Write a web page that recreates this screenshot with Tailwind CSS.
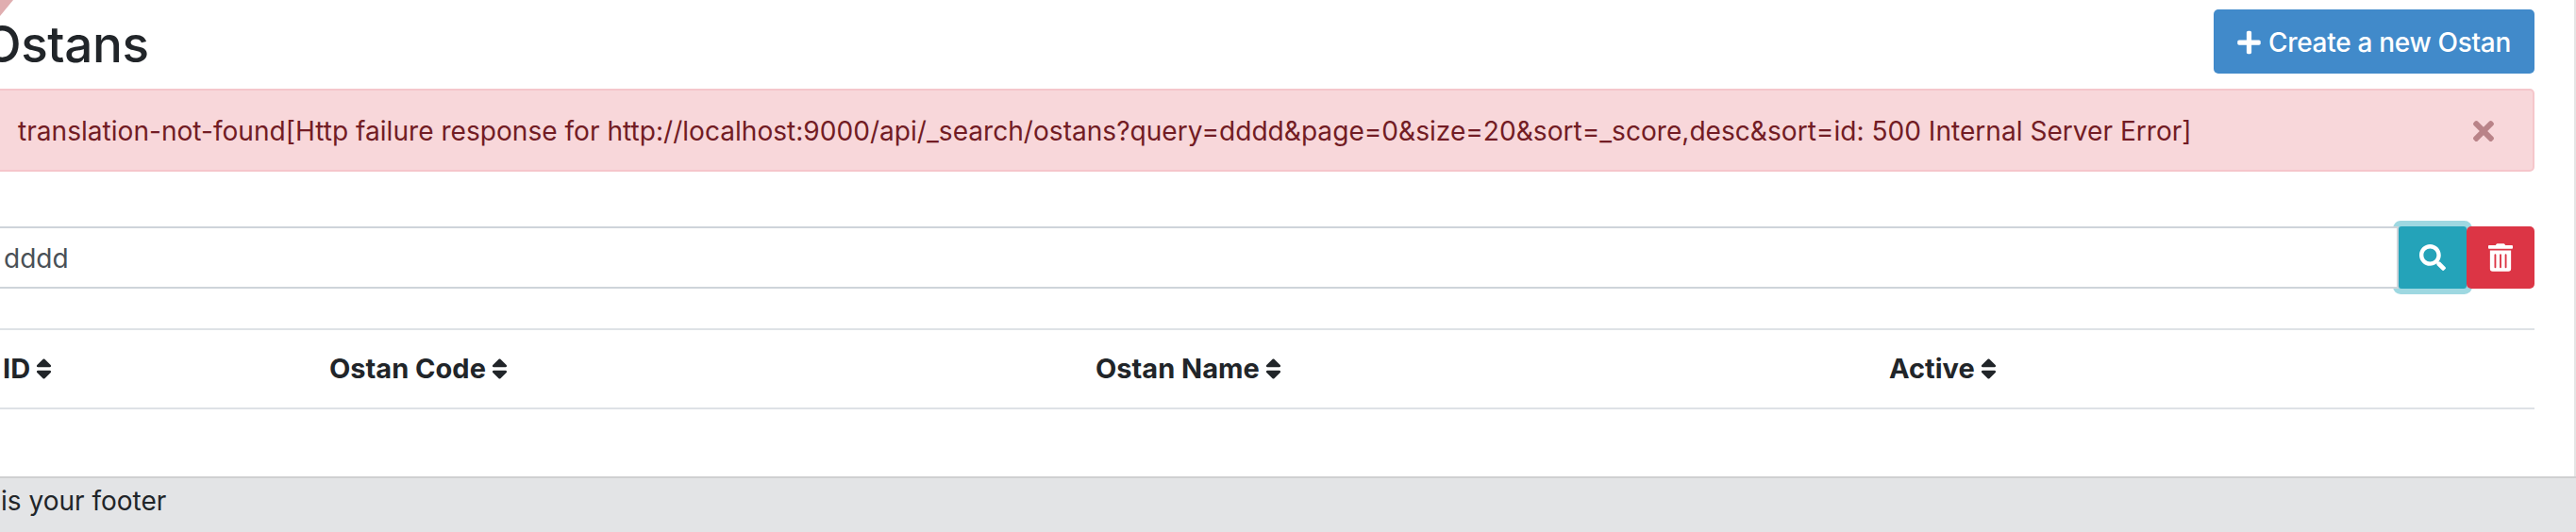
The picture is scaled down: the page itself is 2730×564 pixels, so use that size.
<!DOCTYPE html>
<html lang="en">
<head>
  <meta charset="UTF-8" />
  <title>Ostans</title>
  <script src="https://cdn.jsdelivr.net/npm/@tailwindcss/browser@4"></script>
</head>
<body class="relative h-[564px] w-[2730px] overflow-hidden bg-white font-['Inter','Roboto',sans-serif] text-[#212529]">

  <!-- ribbon corner -->
  <div class="absolute left-0 top-0 h-[17px] w-[14px] bg-[#e0aeb0] [clip-path:polygon(0_0,100%_0,0_100%)]"></div>

  <div class="flex h-[505px] w-[2730px] flex-col border-r-2 border-[#e5e5e5] pr-[42px] pl-0">
    <main class="-ml-[18px] flex w-[2704px] flex-col">

      <!-- title -->
      <div class="flex h-[94px] items-start justify-between pt-[10px]">
        <h2 class="pt-[3px] text-[53px] leading-[68px] font-medium tracking-[-0.4px]">Ostans</h2>
        <button class="flex h-[68px] w-[340px] items-center justify-center gap-[8px] rounded-[5px] bg-[#418aca] pt-[2px] text-[28px] font-medium text-white">
          <svg class="h-[28px] w-[25px] fill-white" viewBox="0 0 448 512"><path d="M416 208H272V64c0-17.67-14.33-32-32-32h-32c-17.67 0-32 14.33-32 32v144H32c-17.67 0-32 14.33-32 32v32c0 17.67 14.33 32 32 32h144v144c0 17.67 14.33 32 32 32h32c17.67 0 32-14.33 32-32V304h144c17.67 0 32-14.33 32-32v-32c0-17.67-14.33-32-32-32z"/></svg>
          <span class="tracking-[-0.3px]">Create a new Ostan</span>
        </button>
      </div>

      <!-- alert -->
      <div class="flex h-[88px] items-center justify-between rounded-[5px] border-2 border-[#f5c6cb] bg-[#f8d7da] pr-[41px] pl-[35px] text-[#721c24]">
        <span class="pt-[2px] text-[28.1px] whitespace-nowrap">translation-not-found[Http failure response for http://localhost:9000/api/_search/ostans?query=dddd&amp;page=0&amp;size=20&amp;sort=_score,desc&amp;sort=id: 500 Internal Server Error]</span>
        <svg class="mt-[2px] h-[32px] w-[22px] fill-[#b98388]" viewBox="0 0 352 512"><path d="M242.72 256l100.07-100.07c12.28-12.28 12.28-32.19 0-44.48l-22.24-22.24c-12.28-12.28-32.19-12.28-44.48 0L176 189.28 75.93 89.21c-12.28-12.28-32.19-12.28-44.48 0L9.21 111.45c-12.28 12.28-12.28 32.19 0 44.48L109.28 256 9.21 356.07c-12.28 12.28-12.28 32.19 0 44.48l22.24 22.24c12.28 12.28 32.2 12.28 44.48 0L176 322.72l100.07 100.07c12.28 12.28 32.2 12.28 44.48 0l22.24-22.24c12.28-12.28 12.28-32.19 0-44.48L242.72 256z"/></svg>
      </div>

      <!-- search -->
      <div class="mt-[58px] flex h-[66px]">
        <input value="dddd" class="relative z-20 h-[66px] flex-1 border-2 border-[#ced4da] bg-white pt-[2px] pl-[20px] text-[28px] text-[#495057]" />
        <button class="relative z-10 flex h-[66px] w-[72px] items-center justify-center rounded-[3px] bg-[#24a3b9] shadow-[0_0_0_6px_rgba(23,162,184,0.42)]">
          <svg class="h-[28px] w-[28px] fill-white" viewBox="0 0 512 512"><path d="M505 442.7L405.3 343c-4.5-4.5-10.6-7-17-7H372c27.6-35.3 44-79.7 44-128C416 93.1 322.9 0 208 0S0 93.1 0 208s93.1 208 208 208c48.3 0 92.7-16.4 128-44v16.3c0 6.4 2.5 12.5 7 17l99.7 99.7c9.4 9.4 24.6 9.4 33.9 0l28.3-28.3c9.4-9.4 9.4-24.6.1-34zM208 336c-70.7 0-128-57.2-128-128 0-70.7 57.2-128 128-128 70.7 0 128 57.2 128 128 0 70.7-57.2 128-128 128z"/></svg>
        </button>
        <button class="relative z-20 flex h-[66px] w-[72px] items-center justify-center rounded-[5px] bg-[#dc3545]">
          <svg class="h-[30px] w-[26px] fill-white" viewBox="0 0 448 512"><path d="M32 464a48 48 0 0 0 48 48h288a48 48 0 0 0 48-48V128H32zm272-256a16 16 0 0 1 32 0v224a16 16 0 0 1-32 0zm-96 0a16 16 0 0 1 32 0v224a16 16 0 0 1-32 0zm-96 0a16 16 0 0 1 32 0v224a16 16 0 0 1-32 0zM432 32H312l-9.4-18.7A24 24 0 0 0 281.1 0H166.8a23.72 23.72 0 0 0-21.4 13.3L136 32H16A16 16 0 0 0 0 48v32a16 16 0 0 0 16 16h416a16 16 0 0 0 16-16V48a16 16 0 0 0-16-16z"/></svg>
        </button>
      </div>

      <!-- table -->
      <table class="mt-[42px] w-full table-fixed border-collapse text-left">
        <thead>
          <tr class="h-[84px] border-y-2 border-[#dee2e6] text-[29px] font-bold">
            <th class="w-[346px] pl-[21px]"><span class="inline-flex items-center gap-[6px]">ID <svg class="h-[28px] w-[17px] fill-[#212529]" viewBox="0 0 320 512"><path d="M41 288h238c21.4 0 32.1 25.9 17 41L177 448c-9.4 9.4-24.6 9.4-33.9 0L24 329c-15.1-15.1-4.4-41 17-41zm255-105L177 64c-9.4-9.4-24.6-9.4-33.9 0L24 183c-15.1 15.1-4.4 41 17 41h238c21.4 0 32.1-25.9 17-41z"/></svg></span></th>
            <th class="w-[812px] pl-[21px]"><span class="inline-flex items-center gap-[6px]">Ostan Code <svg class="h-[28px] w-[17px] fill-[#212529]" viewBox="0 0 320 512"><path d="M41 288h238c21.4 0 32.1 25.9 17 41L177 448c-9.4 9.4-24.6 9.4-33.9 0L24 329c-15.1-15.1-4.4-41 17-41zm255-105L177 64c-9.4-9.4-24.6-9.4-33.9 0L24 183c-15.1 15.1-4.4 41 17 41h238c21.4 0 32.1-25.9 17-41z"/></svg></span></th>
            <th class="w-[841px] pl-[21px]"><span class="inline-flex items-center gap-[6px]">Ostan Name <svg class="h-[28px] w-[17px] fill-[#212529]" viewBox="0 0 320 512"><path d="M41 288h238c21.4 0 32.1 25.9 17 41L177 448c-9.4 9.4-24.6 9.4-33.9 0L24 329c-15.1-15.1-4.4-41 17-41zm255-105L177 64c-9.4-9.4-24.6-9.4-33.9 0L24 183c-15.1 15.1-4.4 41 17 41h238c21.4 0 32.1-25.9 17-41z"/></svg></span></th>
            <th class="pl-[21px]"><span class="inline-flex items-center gap-[6px]">Active <svg class="h-[28px] w-[17px] fill-[#212529]" viewBox="0 0 320 512"><path d="M41 288h238c21.4 0 32.1 25.9 17 41L177 448c-9.4 9.4-24.6 9.4-33.9 0L24 329c-15.1-15.1-4.4-41 17-41zm255-105L177 64c-9.4-9.4-24.6-9.4-33.9 0L24 183c-15.1 15.1-4.4 41 17 41h238c21.4 0 32.1-25.9 17-41z"/></svg></span></th>
          </tr>
        </thead>
      </table>
    </main>
  </div>

  <!-- footer -->
  <footer class="h-[59px] overflow-hidden border-t-2 border-[#cfd0d1] bg-[#e3e4e6]">
    <p class="-ml-[63px] pt-[4px] text-[28px] leading-[40px]">This is your footer</p>
  </footer>
</body>
</html>
